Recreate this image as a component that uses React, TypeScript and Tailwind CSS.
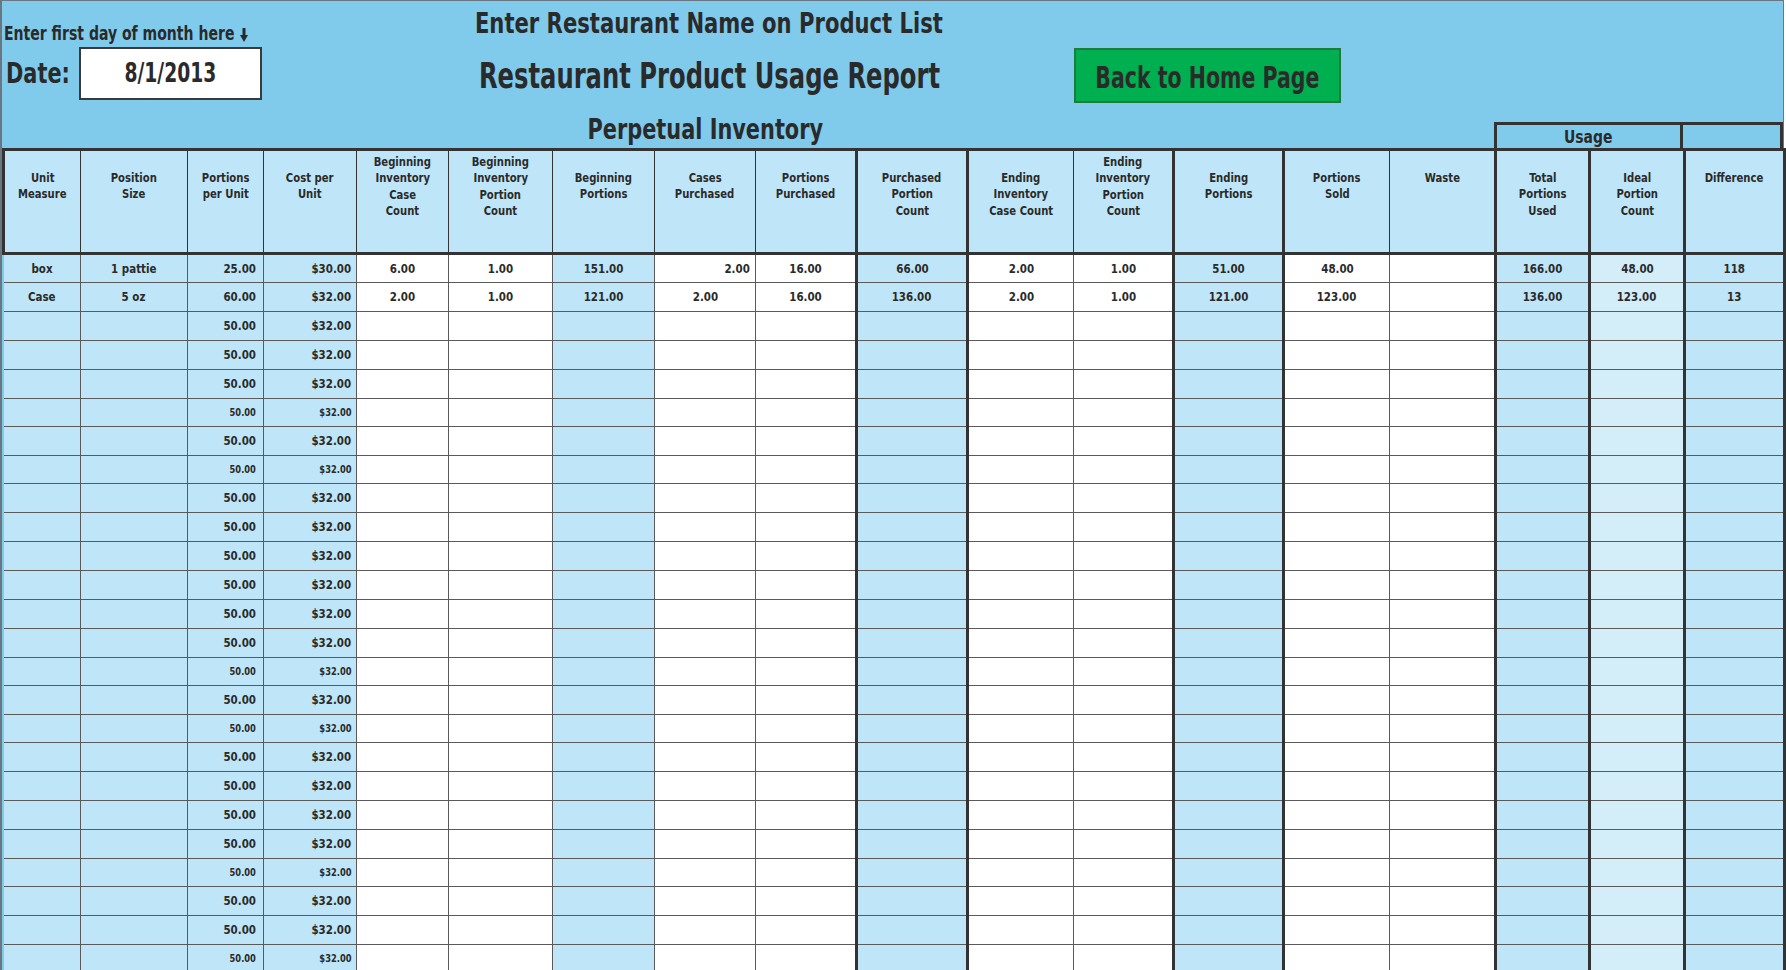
import React from "react";

const BLUE = "bg-[#bfe6f8]";
const LIGHT = "bg-[#d3edf9]";
const WHITE = "bg-white";

type Col = { w: string; head: string[]; bg: string; thick?: boolean };

const cols: Col[] = [
  { w: "w-[77px]", head: ["Unit", "Measure"], bg: BLUE },
  { w: "w-[107px]", head: ["Position", "Size"], bg: BLUE },
  { w: "w-[76px]", head: ["Portions", "per Unit"], bg: BLUE },
  { w: "w-[93px]", head: ["Cost per", "Unit"], bg: BLUE },
  { w: "w-[92px]", head: ["Beginning", "Inventory", "Case", "Count"], bg: WHITE },
  { w: "w-[104px]", head: ["Beginning", "Inventory", "Portion", "Count"], bg: WHITE },
  { w: "w-[102px]", head: ["Beginning", "Portions"], bg: BLUE },
  { w: "w-[101px]", head: ["Cases", "Purchased"], bg: WHITE },
  { w: "w-[101px]", head: ["Portions", "Purchased"], bg: WHITE, thick: true },
  { w: "w-[111px]", head: ["Purchased", "Portion", "Count"], bg: BLUE, thick: true },
  { w: "w-[106px]", head: ["Ending", "Inventory", "Case Count"], bg: WHITE },
  { w: "w-[100px]", head: ["Ending", "Inventory", "Portion", "Count"], bg: WHITE, thick: true },
  { w: "w-[110px]", head: ["Ending", "Portions"], bg: BLUE, thick: true },
  { w: "w-[106px]", head: ["Portions", "Sold"], bg: WHITE },
  { w: "w-[106px]", head: ["Waste"], bg: WHITE, thick: true },
  { w: "w-[94px]", head: ["Total", "Portions", "Used"], bg: BLUE, thick: true },
  { w: "w-[95px]", head: ["Ideal", "Portion", "Count"], bg: LIGHT, thick: true },
  { w: "w-[100px]", head: ["Difference"], bg: BLUE, thick: true },
];

// cell text; a leading ">" means right aligned
const filled = [
  ["box", "1 pattie", ">25.00", ">$30.00", "6.00", "1.00", "151.00", ">2.00", "16.00", "66.00", "2.00", "1.00", "51.00", "48.00", "", "166.00", "48.00", "118"],
  ["Case", "5 oz", ">60.00", ">$32.00", "2.00", "1.00", "121.00", "2.00", "16.00", "136.00", "2.00", "1.00", "121.00", "123.00", "", "136.00", "123.00", "13"],
];
const smallRows = [5, 7, 14, 16, 21, 24];

const rows: string[][] = [];
for (let i = 0; i < 25; i++) {
  if (i < 2) rows.push(filled[i]);
  else rows.push(["", "", ">50.00", ">$32.00", ...Array(14).fill("")]);
}

function DownArrow() {
  return (
    <svg width="8" height="15" viewBox="0 0 8 15" className="inline-block ml-[4px] mt-[3px]">
      <rect x="2.5" y="1" width="3" height="8" fill="#2a2a2a" />
      <path d="M0 8 H8 L4 15 Z" fill="#2a2a2a" />
    </svg>
  );
}

export default function App() {
  return (
    <div className="w-[1786px] h-[970px] overflow-hidden bg-white font-['DejaVu_Sans_Condensed','DejaVu_Sans',sans-serif] font-bold text-[#2a2a2a]">
      <div className="w-[1784px] border-l-2 border-t border-r border-[#6b7780] bg-[#80caeb]">
        {/* top banner */}
        <div className="flex h-[112px]">
          <div className="w-[472px] pt-[20px]">
            <div className="h-[24px] leading-[24px] text-[20px] pl-[2px] whitespace-nowrap flex items-center">
              <span className="inline-block origin-left scale-x-[0.78] w-[232px]">Enter first day of month here</span>
              <DownArrow />
            </div>
            <div className="flex items-center mt-[2px]">
              <div className="w-[77px] pl-[4px] text-[29px]">
                <span className="inline-block origin-left scale-x-[0.8]">Date:</span>
              </div>
              <div className="w-[183px] h-[53px] border-2 border-[#3a3a3a] bg-white flex items-center justify-center text-[26px]">
                <span className="inline-block scale-x-[0.8]">8/1/2013</span>
              </div>
            </div>
          </div>
          <div className="w-[470px]">
            <div className="pt-[6px] h-[38px] leading-[32px] text-[29px] flex justify-center whitespace-nowrap">
              <span className="inline-block scale-x-[0.81]">Enter Restaurant Name on Product List</span>
            </div>
            <div className="mt-[17px] leading-[40px] text-[35px] flex justify-center whitespace-nowrap">
              <span className="inline-block scale-x-[0.77]">Restaurant Product Usage Report</span>
            </div>
          </div>
          <div className="ml-[130px] mt-[47px] w-[267px] h-[55px] pt-[4px] bg-[#00b050] border-2 border-[#1e7a3e] flex items-center justify-center text-[30px] whitespace-nowrap">
            <span className="inline-block scale-x-[0.76]">Back to Home Page</span>
          </div>
        </div>
        <div className="flex h-[35px] items-end">
          <div className="w-[1406px] text-[29px] leading-[32px] self-start flex justify-center whitespace-nowrap">
            <span className="inline-block scale-x-[0.8]">Perpetual Inventory</span>
          </div>
          <div className="w-[86px]" />
          <div className="w-[189px] h-[26px] border-[3px] border-b-0 border-[#333] flex items-center justify-center text-[18px]">
            <span className="inline-block scale-x-[0.86]">Usage</span>
          </div>
          <div className="w-[100px] h-[26px] border-[3px] border-l-0 border-b-0 border-[#333]" />
        </div>

        {/* table */}
        <table className="table-fixed border-collapse w-[1781px]">
          <thead>
            <tr className="h-[104px]">
              {cols.map((c, i) => (
                <th
                  key={i}
                  className={`${c.w} ${BLUE} align-top font-bold text-[13px] leading-[16.3px] border-t-[3px] border-b-[3px] border-[#333] ${c.head.length === 4 ? "pt-[3px]" : "pt-[19px]"} ${c.thick ? "border-r-[3px]" : "border-r"} ${i === 0 ? "border-l-[3px]" : ""}`}
                >
                  {c.head.map((h) => (
                    <div key={h} className="whitespace-nowrap">
                      <span className="inline-block scale-x-[0.86]">{h}</span>
                    </div>
                  ))}
                </th>
              ))}
            </tr>
          </thead>
          <tbody>
            {rows.map((r, ri) => {
              const small = smallRows.includes(ri);
              return (
                <tr key={ri} className={small ? "h-[28px]" : "h-[29px]"}>
                  {r.map((v, ci) => {
                    const c = cols[ci];
                    const right = v.startsWith(">");
                    const text = right ? v.slice(1) : v;
                    return (
                      <td
                        key={ci}
                        className={`${c.bg} p-0 border-b border-[#5a5a5a] ${c.thick ? "border-r-[3px] border-r-[#333]" : "border-r border-r-[#5a5a5a]"} ${right ? (ci === 2 ? "text-right pr-[7px]" : "text-right pr-[5px]") : "text-center"} ${small ? "text-[10.5px]" : "text-[13px]"}`}
                      >
                        <span className={`inline-block scale-x-[0.88] ${right ? "origin-right" : ""}`}>{text}</span>
                      </td>
                    );
                  })}
                </tr>
              );
            })}
          </tbody>
        </table>
      </div>
    </div>
  );
}
